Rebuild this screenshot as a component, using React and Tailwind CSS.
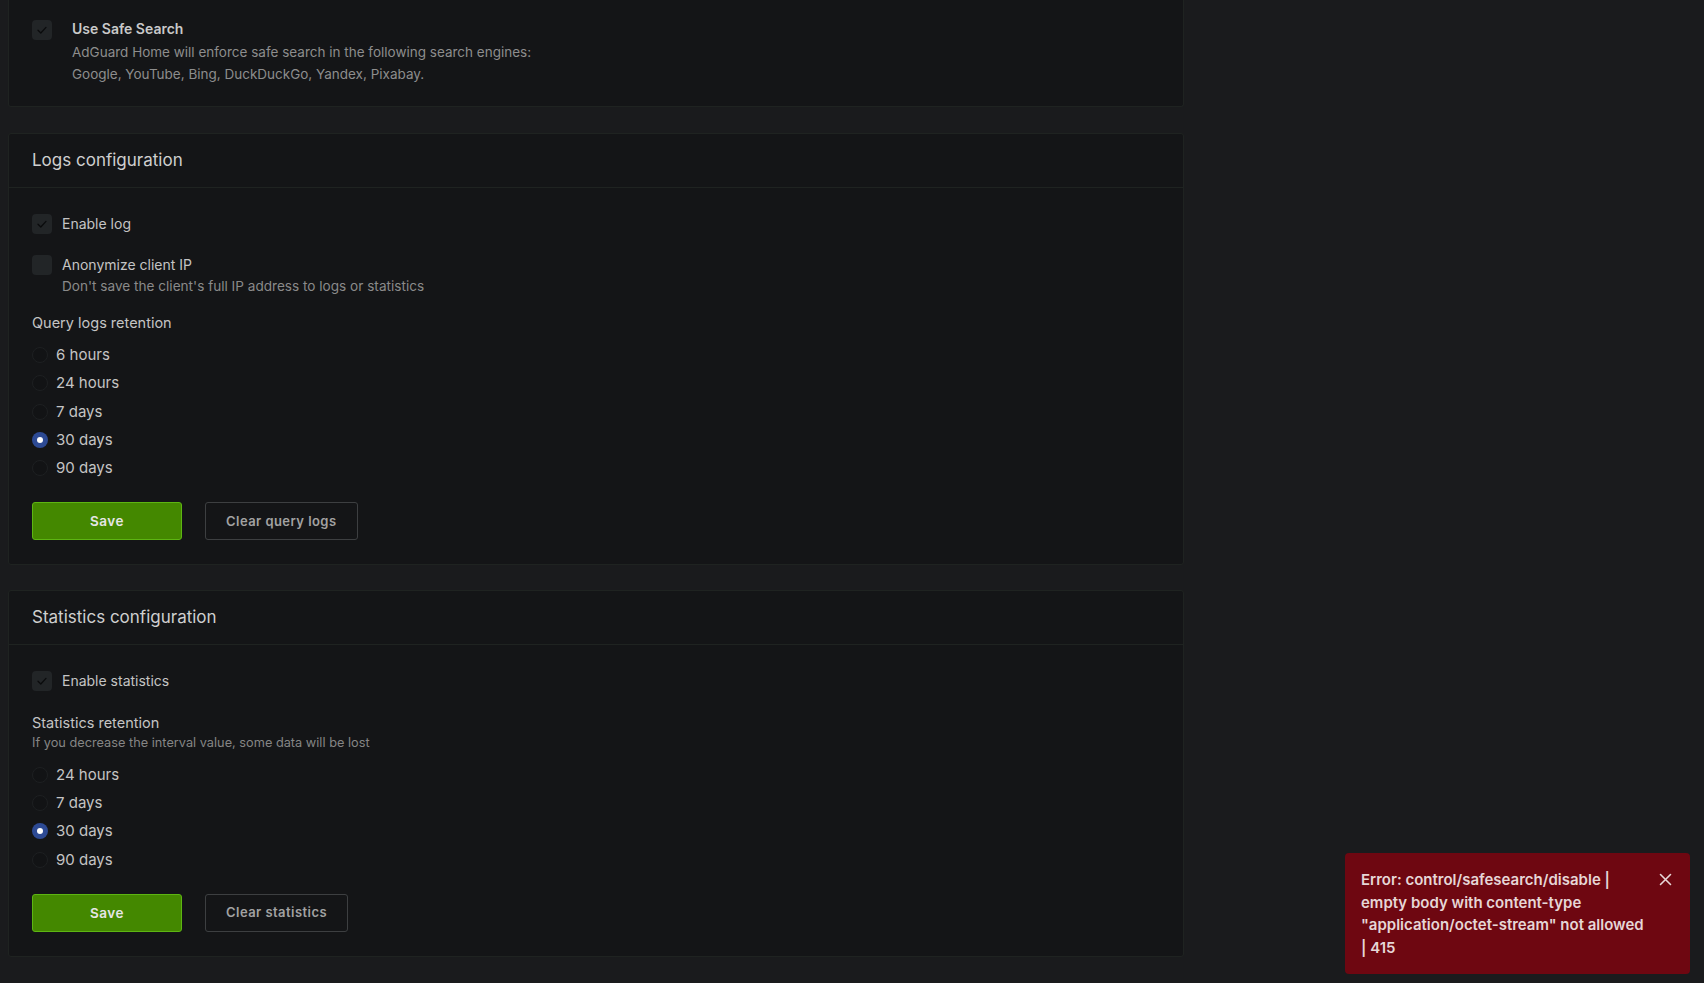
import React from 'react';

const font = { fontFamily: 'Inter, "Noto Sans", sans-serif' };

const Check = ({ checked }) => (
    <span className="flex h-[20px] w-[20px] shrink-0 items-center justify-center rounded-[4px] bg-[#222527]">
        {checked && (
            <svg width="12" height="12" viewBox="0 0 12 12" fill="none">
                <path d="M2 6.2 L4.8 9 L10 3.4" stroke="#0a0b0c" strokeWidth="1.3" strokeLinecap="round" strokeLinejoin="round" />
            </svg>
        )}
    </span>
);

const Radio = ({ label, selected }) => (
    <label className="flex h-[28.3px] items-center gap-[8px]">
        {selected ? (
            <span className="flex h-[16px] w-[16px] shrink-0 items-center justify-center rounded-full bg-[#2d4a94]">
                <span className="h-[6px] w-[6px] rounded-full bg-white"></span>
            </span>
        ) : (
            <span className="h-[16px] w-[16px] shrink-0 rounded-full border border-[#1e2022] bg-[#121315]"></span>
        )}
        <span className="text-[15px] leading-[20px] text-[#c4c4c4]">{label}</span>
    </label>
);

const Buttons = ({ clearText }) => (
    <div className="mt-[20px] flex gap-[23px]">
        <button className="h-[38px] w-[150px] rounded-[3px] border border-[#5db512] bg-[#448800] text-[13.5px] font-semibold tracking-[0.5px] text-[#e6e6e6]">
            Save
        </button>
        <button className="h-[38px] rounded-[3px] border border-[#3d3f41] px-[20px] text-[13px] font-semibold tracking-[0.45px] text-[#a2a2a2]">
            {clearText}
        </button>
    </div>
);

const Card = ({ title, children, className = '' }) => (
    <div className={`w-[1176px] rounded-[3px] border border-[#1f2321] bg-[#141517] ${className}`}>
        <div className="flex h-[54px] items-center border-b border-[#1f2321] px-[23px]">
            <h3 className="text-[17px] font-normal text-[#cfcfcf]">{title}</h3>
        </div>
        <div className="px-[23px] pt-[26px] pb-[24px]">{children}</div>
    </div>
);

export default function App() {
    return (
        <div className="relative h-[983px] overflow-hidden bg-[#1a1b1d] pl-[8px]" style={font}>
            {/* Safe search block, scrolled partly out of view */}
            <div className="flex w-[1176px] gap-[20px] rounded-b-[3px] border-x border-b border-[#1f2321] bg-[#141517] px-[23px] pt-[18px] pb-[21px]">
                <div className="mt-[2px]">
                    <Check checked />
                </div>
                <div>
                    <div className="text-[14px] font-semibold leading-[22px] text-[#c9c9c9]">Use Safe Search</div>
                    <div className="mt-[1px] text-[13.5px] leading-[22px] text-[#8d8d8d]">
                        AdGuard Home will enforce safe search in the following search engines:
                        <br />
                        Google, YouTube, Bing, DuckDuckGo, Yandex, Pixabay.
                    </div>
                </div>
            </div>

            <Card title="Logs configuration" className="mt-[26px]">
                <div className="flex items-center gap-[10px]">
                    <Check checked />
                    <span className="text-[14px] leading-[20px] text-[#c4c4c4]">Enable log</span>
                </div>
                <div className="mt-[21px] flex items-start gap-[10px]">
                    <Check />
                    <div>
                        <div className="text-[14px] leading-[20px] text-[#c4c4c4]">Anonymize client IP</div>
                        <div className="mt-[1px] text-[13.6px] leading-[21px] text-[#8a8a8a]">
                            Don't save the client's full IP address to logs or statistics
                        </div>
                    </div>
                </div>
                <div className="mt-[16px] text-[14.5px] leading-[20px] text-[#c4c4c4]">Query logs retention</div>
                <div className="mt-[8px]">
                    <Radio label="6 hours" />
                    <Radio label="24 hours" />
                    <Radio label="7 days" />
                    <Radio label="30 days" selected />
                    <Radio label="90 days" />
                </div>
                <Buttons clearText="Clear query logs" />
            </Card>

            <Card title="Statistics configuration" className="mt-[25px]">
                <div className="flex items-center gap-[10px]">
                    <Check checked />
                    <span className="text-[14px] leading-[20px] text-[#c4c4c4]">Enable statistics</span>
                </div>
                <div className="mt-[22px] text-[14.5px] leading-[20px] text-[#c4c4c4]">Statistics retention</div>
                <div className="text-[12.75px] leading-[19px] text-[#858585]">
                    If you decrease the interval value, some data will be lost
                </div>
                <div className="mt-[8px]">
                    <Radio label="24 hours" />
                    <Radio label="7 days" />
                    <Radio label="30 days" selected />
                    <Radio label="90 days" />
                </div>
                <Buttons clearText="Clear statistics" />
            </Card>

            {/* Error toast */}
            <div className="absolute right-[14px] bottom-[9px] flex w-[345px] items-start justify-between rounded-[4px] bg-[#6e0711] pt-[16px] pr-[18px] pb-[15px] pl-[16px]">
                <p className="w-[285px] text-[15px] font-semibold leading-[22.5px] text-[#e6d6d6]">
                    Error: control/safesearch/disable | empty body with content-type "application/octet-stream" not allowed | 415
                </p>
                <svg width="13" height="13" viewBox="0 0 13 13" className="mt-[4px]" fill="none">
                    <path d="M1.5 1.5 L11.5 11.5 M11.5 1.5 L1.5 11.5" stroke="#e8d8d8" strokeWidth="1.6" strokeLinecap="round" />
                </svg>
            </div>
        </div>
    );
}
